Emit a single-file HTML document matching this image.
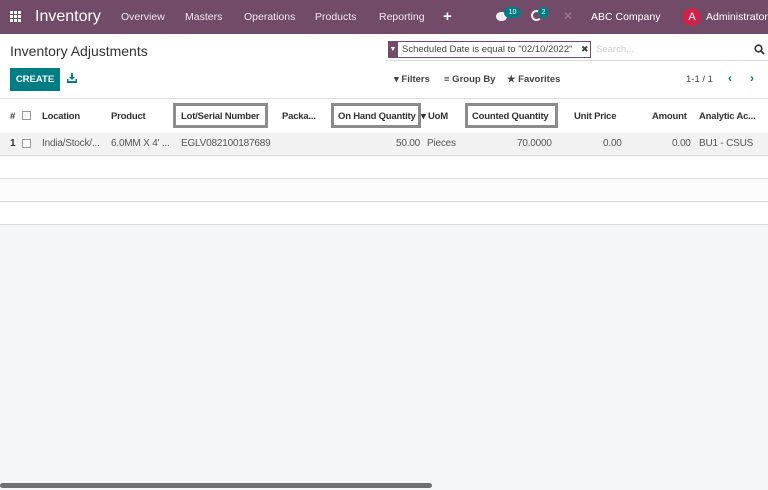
<!DOCTYPE html>
<html><head><meta charset="utf-8"><style>
*{margin:0;padding:0;box-sizing:border-box}
body{width:768px;height:490px;overflow:hidden;background:#f5f6f9;font-family:"Liberation Sans",sans-serif;position:relative;color:#444}
.a{position:absolute;white-space:nowrap}
.nav{position:absolute;left:0;top:0;width:768px;height:34px;background:#714b67;color:#fff}
.nav .m{font-size:10.5px;top:11px;color:#f0e6ee}
.hd{font-size:9.5px;font-weight:bold;color:#333;top:111px;letter-spacing:-.2px}
.cl{font-size:10px;color:#555;top:138px;letter-spacing:-.2px}
.box{position:absolute;border:3px solid #8c8c8c;height:25px;top:103px}
.cb{position:absolute;width:9px;height:9px;border:1px solid #999;background:#fff}
</style></head><body>
<div class="nav">
 <svg class="a" style="left:10px;top:11px" width="11" height="11" viewBox="0 0 11 11" fill="#fff"><rect x="0" y="0" width="3" height="3"/><rect x="4" y="0" width="3" height="3"/><rect x="8" y="0" width="3" height="3"/><rect x="0" y="4" width="3" height="3"/><rect x="4" y="4" width="3" height="3"/><rect x="8" y="4" width="3" height="3"/><rect x="0" y="8" width="3" height="3"/><rect x="4" y="8" width="3" height="3"/><rect x="8" y="8" width="3" height="3"/></svg>
 <div class="a" style="left:35px;top:8px;font-size:16px;color:#fff">Inventory</div>
 <div class="a m" style="left:121px">Overview</div>
 <div class="a m" style="left:185px">Masters</div>
 <div class="a m" style="left:244px">Operations</div>
 <div class="a m" style="left:315px">Products</div>
 <div class="a m" style="left:379px">Reporting</div>
 <div class="a" style="left:443px;top:8px;font-size:15px;font-weight:bold">+</div>
 <div class="a" style="left:496px;top:12px;width:11px;height:9px;background:#eee;border-radius:5px"></div>
 <div class="a" style="left:504px;top:7px;width:17px;height:11px;background:#017e84;border-radius:6px;font-size:7px;text-align:center;line-height:11px">10</div>
 <div class="a" style="left:531px;top:10px;width:11px;height:11px;border:2px solid #eee;border-right-color:transparent;border-radius:50%"></div>
 <div class="a" style="left:538px;top:7px;width:11px;height:11px;background:#017e84;border-radius:6px;font-size:7px;text-align:center;line-height:11px">2</div>
 <div class="a" style="left:563px;top:9px;font-size:12px;color:#9c8298">✕</div>
 <div class="a m" style="left:591px;color:#fff">ABC Company</div>
 <div class="a" style="left:683px;top:8px;width:18px;height:18px;border-radius:50%;background:#d2224a;font-size:11px;text-align:center;line-height:18px">A</div>
 <div class="a m" style="left:706px;color:#fff">Administrator</div>
</div>
<div class="a" style="left:0;top:34px;width:768px;height:66px;background:#fff"></div>
<div class="a" style="left:10px;top:43px;font-size:14px;color:#333">Inventory Adjustments</div>
<div class="a" style="left:10px;top:68px;width:50px;height:23px;background:#017e84;color:#fff;font-size:9.5px;font-weight:bold;text-align:center;line-height:23px">CREATE</div>
<svg class="a" style="left:67px;top:73px" width="10" height="10" viewBox="0 0 10 10" fill="#017e84"><rect x="4" y="0" width="2" height="5"/><polygon points="2,4 8,4 5,7"/><rect x="0" y="8" width="10" height="2"/><rect x="0" y="6" width="1.5" height="3"/><rect x="8.5" y="6" width="1.5" height="3"/></svg>
<div class="a" style="left:388px;top:41px;width:203px;height:17px;border:1px solid #714b67;background:#fff"></div>
<div class="a" style="left:388px;top:41px;width:10px;height:17px;background:#714b67;color:#fff;font-size:7px;text-align:center;line-height:17px">▼</div>
<div class="a" style="left:402px;top:44px;font-size:9.5px;color:#444">Scheduled Date is equal to "02/10/2022"</div>
<div class="a" style="left:581px;top:44px;font-size:9px;color:#444">✖</div>
<div class="a" style="left:596px;top:44px;font-size:9.5px;color:#ccc">Search...</div>
<div class="a" style="left:386px;top:60px;width:382px;height:1px;background:#ddd"></div>
<svg class="a" style="left:754px;top:44px" width="11" height="11" viewBox="0 0 11 11"><circle cx="4.5" cy="4.5" r="3.3" stroke="#333" stroke-width="1.6" fill="none"/><line x1="7" y1="7" x2="10" y2="10" stroke="#333" stroke-width="1.8"/></svg>
<div class="a" style="left:394px;top:74px;font-size:9.5px;font-weight:bold;color:#444">▾ Filters</div>
<div class="a" style="left:444px;top:74px;font-size:9.5px;font-weight:bold;color:#444">≡ Group By</div>
<div class="a" style="left:507px;top:74px;font-size:9.5px;font-weight:bold;color:#444">★ Favorites</div>
<div class="a" style="left:686px;top:74px;font-size:9.5px;color:#444">1-1 / 1</div>
<div class="a" style="left:728px;top:71px;font-size:12px;color:#017e84;font-weight:bold">‹</div>
<div class="a" style="left:750px;top:71px;font-size:12px;color:#017e84;font-weight:bold">›</div>
<div class="a" style="left:0;top:98px;width:768px;height:1px;background:#ddd"></div>
<div class="a" style="left:0;top:99px;width:768px;height:34px;background:#fff"></div>
<div class="a" style="left:0;top:133px;width:768px;height:23px;background:#f2f2f2;border-bottom:1px solid #ddd"></div>
<div class="a" style="left:0;top:157px;width:768px;height:22px;background:#fff;border-bottom:1px solid #ddd"></div>
<div class="a" style="left:0;top:180px;width:768px;height:22px;background:#fcfcfc;border-bottom:1px solid #ddd"></div>
<div class="a" style="left:0;top:203px;width:768px;height:22px;background:#fff;border-bottom:1px solid #ddd"></div>
<div class="box" style="left:173px;width:95px"></div>
<div class="box" style="left:331px;width:90px"></div>
<div class="box" style="left:465px;width:93px"></div>
<div class="a hd" style="left:10px">#</div><div class="cb" style="left:22px;top:111px"></div>
<div class="a hd" style="left:42px">Location</div>
<div class="a hd" style="left:111px">Product</div>
<div class="a hd" style="left:181px">Lot/Serial Number</div>
<div class="a hd" style="left:282px">Packa...</div>
<div class="a hd" style="left:338px">On Hand Quantity</div>
<div class="a hd" style="left:421px">▾ UoM</div>
<div class="a hd" style="left:472px">Counted Quantity</div>
<div class="a hd" style="left:574px">Unit Price</div>
<div class="a hd" style="left:652px">Amount</div>
<div class="a hd" style="left:699px">Analytic Ac...</div>
<div class="a cl" style="left:10px;font-weight:bold;color:#333">1</div><div class="cb" style="left:22px;top:139px"></div>
<div class="a cl" style="left:42px">India/Stock/...</div>
<div class="a cl" style="left:111px">6.0MM X 4' ...</div>
<div class="a cl" style="left:181px">EGLV082100187689</div>
<div class="a cl" style="left:396px">50.00</div>
<div class="a cl" style="left:427px">Pieces</div>
<div class="a cl" style="left:517px">70.0000</div>
<div class="a cl" style="left:603px">0.00</div>
<div class="a cl" style="left:672px">0.00</div>
<div class="a cl" style="left:699px">BU1 - CSUS</div>
<div class="a" style="left:0;top:483px;width:432px;height:5px;background:#707070;border-radius:3px"></div>
</body></html>
